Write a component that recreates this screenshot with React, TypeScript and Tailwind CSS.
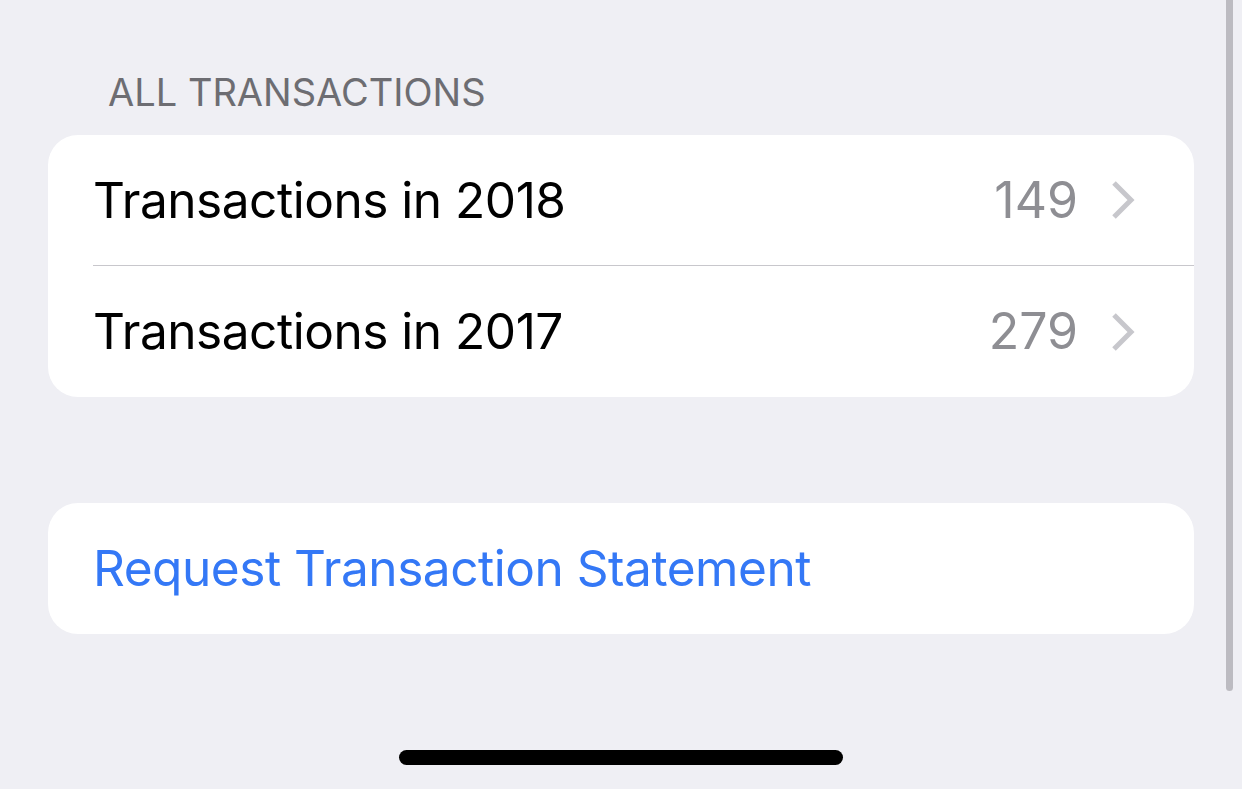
import React from 'react';

const rows = [
  { label: 'Transactions in 2018', count: '149' },
  { label: 'Transactions in 2017', count: '279' },
];

function Chevron() {
  return (
    <svg width="26" height="40" viewBox="0 0 26 40" className="shrink-0">
      <path d="M4 3 L21 20 L4 37" fill="none" stroke="#c7c7cc" strokeWidth="5" strokeLinecap="butt" strokeLinejoin="miter" />
    </svg>
  );
}

export default function App() {
  return (
    <div
      className="relative w-[1242px] h-[789px] overflow-hidden bg-[#efeff4]"
      style={{ fontFamily: 'Inter, "Noto Sans", sans-serif' }}
    >
      <div className="pl-[48px] pr-[48px] pt-[70px]">
        <div className="pl-[60px] text-[38px] leading-[44px] text-[#6d6d72]">
          ALL TRANSACTIONS
        </div>

        {/* list card */}
        <div className="mt-[21px] bg-white rounded-[30px] overflow-hidden">
          {rows.map((r, i) => (
            <div key={r.label} className="pl-[45px]">
              <div
                className={
                  'flex items-center h-[131px] pr-[58px] ' +
                  (i < rows.length - 1 ? 'border-b border-[#c8c7cc]' : '')
                }
              >
                <span className="flex-1 text-[49.6px] text-black tracking-[-0.01em]">{r.label}</span>
                <span className="text-[50px] text-[#8e8e93] mr-[32px]">{r.count}</span>
                <Chevron />
              </div>
            </div>
          ))}
        </div>

        {/* statement card */}
        <div className="mt-[106px] bg-white rounded-[30px] h-[131px] flex items-center pl-[45px]">
          <span className="text-[49.6px] text-[#3478f6] tracking-[-0.01em]">Request Transaction Statement</span>
        </div>
      </div>

      {/* scroll indicator */}
      <div className="absolute right-[9px] top-0 w-[7px] h-[691px] rounded-b-full bg-[#bcbbc1]" />

      {/* home indicator */}
      <div className="absolute left-[399px] top-[750px] w-[444px] h-[15px] rounded-full bg-black" />
    </div>
  );
}
